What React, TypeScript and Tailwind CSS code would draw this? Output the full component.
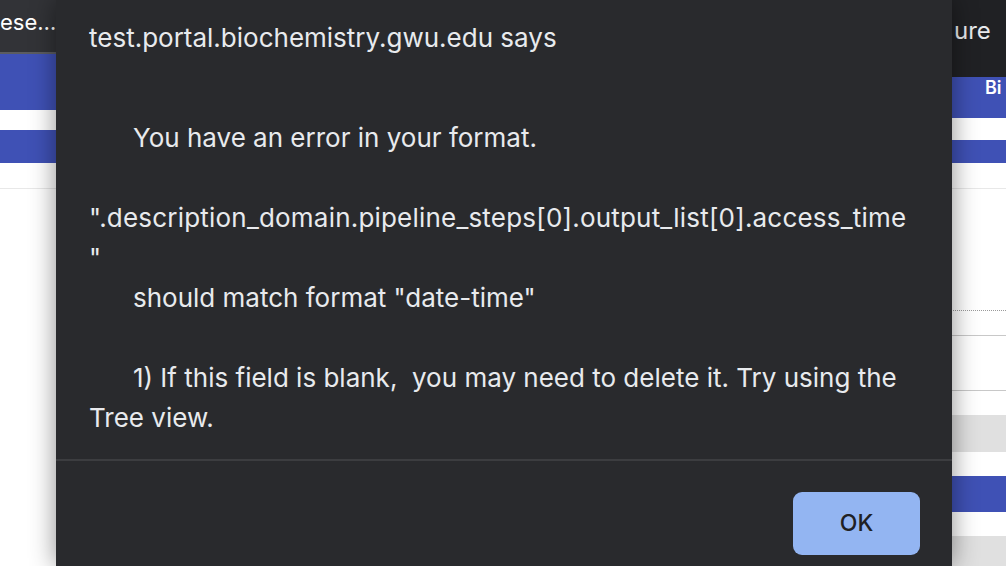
import * as React from "react"

const font = { fontFamily: "Inter, 'Noto Sans', 'Liberation Sans', sans-serif" }

function LeftPage() {
  return (
    <div className="flex h-full w-[80px] shrink-0 flex-col bg-white">
      <div className="flex h-[52px] items-center overflow-hidden bg-[#323337] pb-2 text-[22px] text-white">
        <span className="whitespace-nowrap">ese…</span>
      </div>
      <div className="h-[2px] bg-[#5b5c60]" />
      <div className="h-[56px] bg-[#3f51b5]" />
      <div className="h-[20px] bg-white" />
      <div className="h-[33px] bg-[#3f51b5]" />
      <div className="h-[26px] border-b border-[#e8e8e8] bg-white" />
      <div className="flex-1 bg-white" />
    </div>
  )
}

function RightPage() {
  return (
    <div className="flex h-full w-[80px] shrink-0 flex-col bg-white">
      <div className="flex h-[77px] items-start overflow-hidden bg-[#202124] pt-[13px] text-[24px] text-[#e8eaed]">
        <span className="whitespace-nowrap pl-[28px]">ure</span>
      </div>
      <div className="flex h-[41px] items-start bg-[#3f51b5] pl-[59px] text-[18px] font-semibold leading-[22px] text-white">
        <span className="whitespace-nowrap">Bi</span>
      </div>
      <div className="h-[22px] bg-white" />
      <div className="h-[23px] bg-[#3f51b5]" />
      <div className="h-[26px] border-b border-[#e8e8e8] bg-white" />
      <div className="h-[122px] border-b border-dotted border-[#9a9a9a] bg-white" />
      <div className="h-[25px] border-b border-[#c8c8c8] bg-white" />
      <div className="h-[55px] border-b border-[#c8c8c8] bg-white" />
      <div className="h-[24px] bg-white" />
      <div className="h-[37px] bg-[#e0e0e0]" />
      <div className="h-[24px] bg-white" />
      <div className="h-[36px] bg-[#3f51b5]" />
      <div className="h-[24px] bg-white" />
      <div className="flex-1 bg-[#e0e0e0]" />
    </div>
  )
}

function AlertDialog() {
  return (
    <div
      className="absolute left-[56px] top-0 flex h-[566px] w-[896px] flex-col bg-[#292a2d] text-[#e8eaed] shadow-[0_0_24px_rgba(0,0,0,0.45)]"
      style={font}
    >
      <div className="px-[33px] pt-[21px] text-[26px] leading-[34px]">test.portal.biochemistry.gwu.edu says</div>
      <div className="mt-[63px] px-[33px] text-[26px] leading-[40px]">
        <div className="pl-[44px]">You have an error in your format.</div>
        <div className="h-10" />
        <div className="whitespace-nowrap tracking-[0.2px]">".description_domain.pipeline_steps[0].output_list[0].access_time</div>
        <div>"</div>
        <div className="pl-[44px]">should match format "date-time"</div>
        <div className="h-10" />
        <div className="whitespace-nowrap pl-[44px]">1) If this field is blank,&nbsp; you may need to delete it. Try using the</div>
        <div>Tree view.</div>
      </div>
      <div className="mt-[21px] h-[2px] bg-[#3c3d40]" />
      <div className="flex justify-end pr-[32px] pt-[31px]">
        <button className="flex h-[63px] w-[127px] items-center justify-center rounded-[9px] bg-[#93b5f2] text-[23px] font-medium text-[#202124]">
          OK
        </button>
      </div>
    </div>
  )
}

export default function App() {
  return (
    <div className="relative h-[566px] w-[1006px] overflow-hidden" style={font}>
      <div className="flex h-full w-full justify-between">
        <LeftPage />
        <RightPage />
      </div>
      <AlertDialog />
    </div>
  )
}
